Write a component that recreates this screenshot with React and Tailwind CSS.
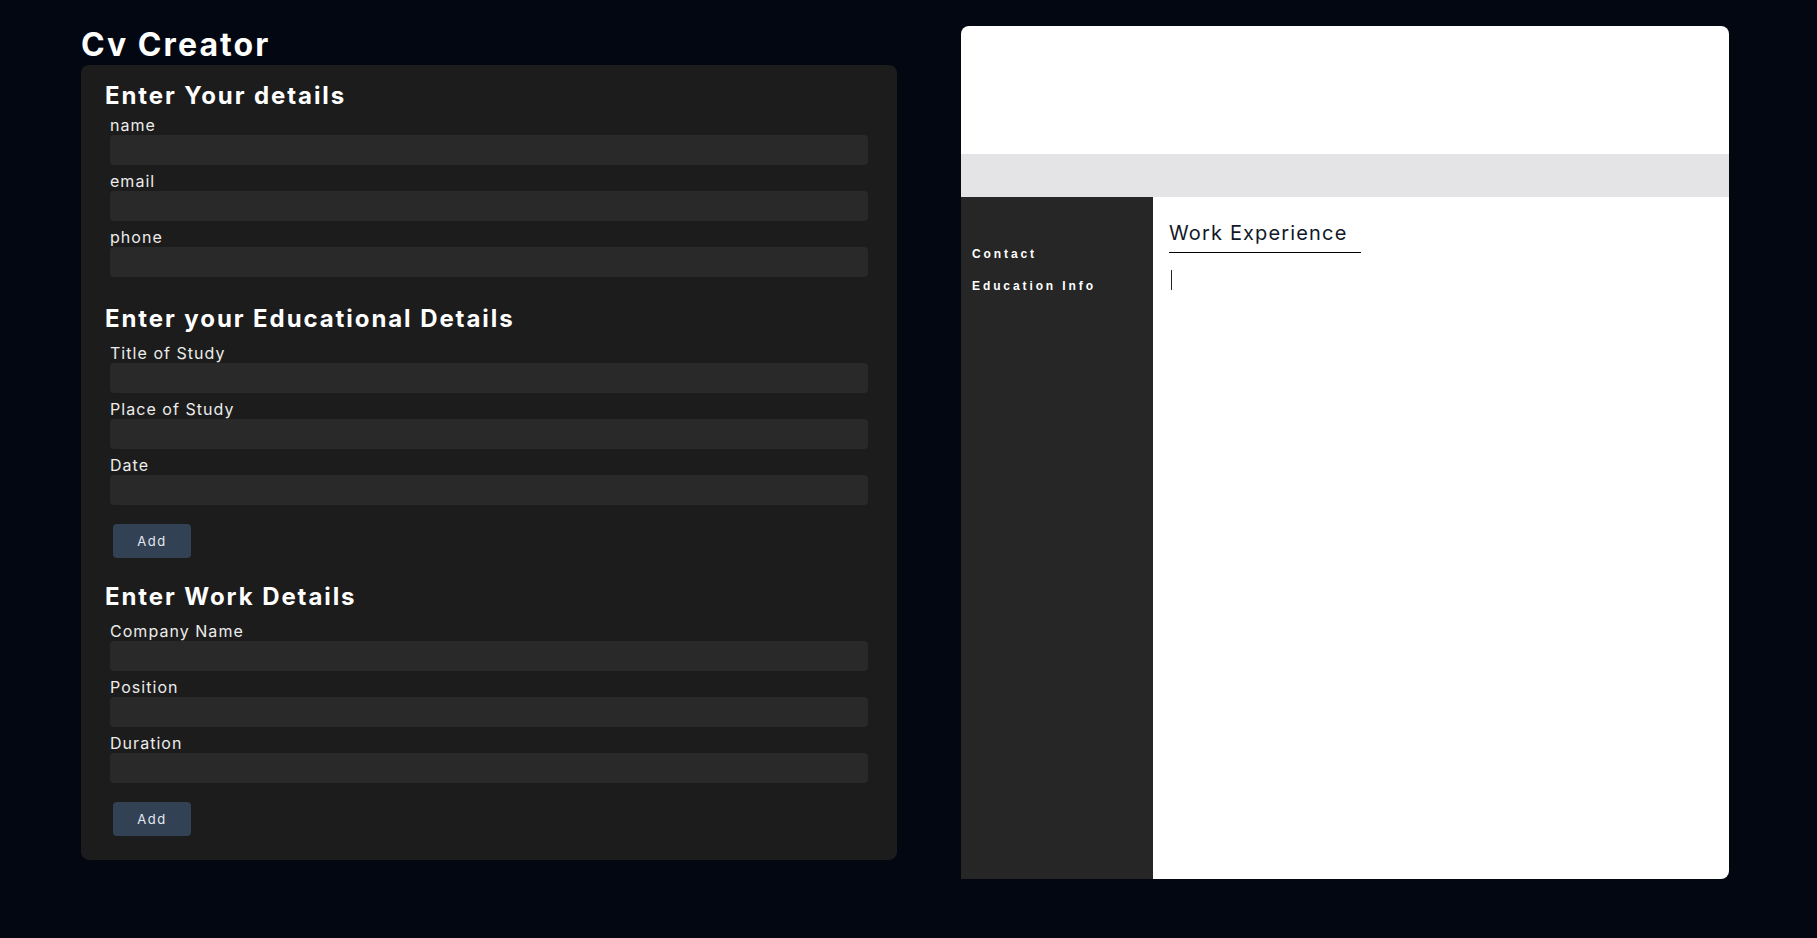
import React from "react";

function Field({ label }) {
  return (
    <div className="flex flex-col">
      <label className="text-base leading-5 tracking-[0.065em] text-[#ececec]">{label}</label>
      <input type="text" className="h-[30px] w-full rounded bg-[#292929] outline-none" />
    </div>
  );
}

function Fields({ labels, className }) {
  return (
    <div className={"flex flex-col gap-[6px] px-[5px] " + className}>
      {labels.map((l) => (
        <Field key={l} label={l} />
      ))}
    </div>
  );
}

function AddButton({ className }) {
  return (
    <button className={"ml-2 flex h-[34px] w-[78px] items-center justify-center rounded bg-[#334155] pt-px text-[13px] tracking-[0.12em] text-[#e2e8f0] " + className}>
      Add
    </button>
  );
}

export default function App() {
  return (
    <div
      className="flex min-h-screen items-start gap-[64px] bg-[#030712] pl-[81px]"
      style={{ fontFamily: "Inter, 'Noto Sans', sans-serif" }}
    >
      <div className="w-[816px] pt-[29px]">
        <h1 className="mb-[4px] text-[32px] leading-[32px] font-bold tracking-[0.065em] text-white">Cv Creator</h1>
        <div className="rounded-lg bg-[#1c1c1c] px-6 pt-[15px] pb-[24px]">
          <h2 className="text-2xl leading-8 font-bold tracking-[0.08em] text-white">Enter Your details</h2>
          <Fields className="mt-[3px]" labels={["name", "email", "phone"]} />

          <h2 className="mt-[26px] text-2xl leading-8 font-bold tracking-[0.08em] text-white">Enter your Educational Details</h2>
          <Fields className="mt-[8px]" labels={["Title of Study", "Place of Study", "Date"]} />
          <AddButton className="mt-[19px]" />

          <h2 className="mt-[23px] text-2xl leading-8 font-bold tracking-[0.08em] text-white">Enter Work Details</h2>
          <Fields className="mt-[8px]" labels={["Company Name", "Position", "Duration"]} />
          <AddButton className="mt-[19px]" />
        </div>
      </div>

      <div className="mt-[26px] w-[768px] rounded-lg bg-white">
        <div className="h-[128px]" />
        <div className="h-[43px] bg-[#e4e4e7]" />
        <div className="flex h-[682px]">
          <div
            className="flex w-[192px] flex-col gap-3 bg-[#262626] pt-[47px] pl-[11px] text-xs leading-5 font-bold tracking-[2.9px] text-white"
            style={{ fontFamily: "'Liberation Sans', Arial, sans-serif" }}
          >
            <div>Contact</div>
            <div>Education Info</div>
          </div>
          <div className="flex-1 pt-[22px] pl-4">
            <h2 className="w-[192px] border-b border-black pb-[5px] text-xl leading-7 tracking-[1.15px] text-[#111827]">
              Work Experience
            </h2>
            <div className="mt-[17px] ml-[2px] h-[20px] w-px bg-[#2b2118]" />
          </div>
        </div>
      </div>
    </div>
  );
}
